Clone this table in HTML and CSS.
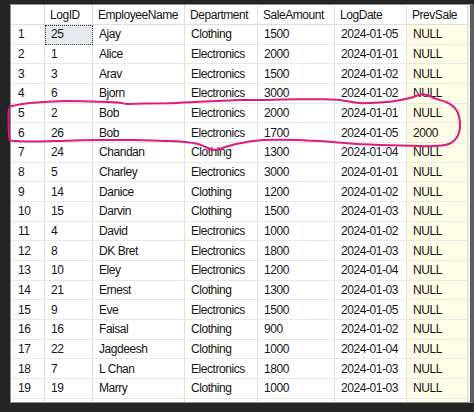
FILE: index.html
```html
<!DOCTYPE html>
<html>
<head>
<meta charset="utf-8">
<link rel="stylesheet" href="styles.css">
</head>
<body>
<div class="frame">
  <div class="box">
    <div class="grid">
      <div class="row head">
        <div class="c num"></div><div class="c">LogID</div><div class="c">EmployeeName</div><div class="c">Department</div><div class="c">SaleAmount</div><div class="c">LogDate</div><div class="c">PrevSale</div>
      </div>
      <div class="row"><div class="c num">1</div><div class="c focus">25</div><div class="c">Ajay</div><div class="c">Clothing</div><div class="c">1500</div><div class="c">2024-01-05</div><div class="c prev">NULL</div></div>
      <div class="row"><div class="c num">2</div><div class="c">1</div><div class="c">Alice</div><div class="c">Electronics</div><div class="c">2000</div><div class="c">2024-01-01</div><div class="c prev">NULL</div></div>
      <div class="row"><div class="c num">3</div><div class="c">3</div><div class="c">Arav</div><div class="c">Electronics</div><div class="c">1500</div><div class="c">2024-01-02</div><div class="c prev">NULL</div></div>
      <div class="row"><div class="c num">4</div><div class="c">6</div><div class="c">Bjorn</div><div class="c">Electronics</div><div class="c">3000</div><div class="c">2024-01-02</div><div class="c prev">NULL</div></div>
      <div class="row"><div class="c num">5</div><div class="c">2</div><div class="c">Bob</div><div class="c">Electronics</div><div class="c">2000</div><div class="c">2024-01-01</div><div class="c prev">NULL</div></div>
      <div class="row"><div class="c num">6</div><div class="c">26</div><div class="c">Bob</div><div class="c">Electronics</div><div class="c">1700</div><div class="c">2024-01-05</div><div class="c prev">2000</div></div>
      <div class="row"><div class="c num">7</div><div class="c">24</div><div class="c">Chandan</div><div class="c">Clothing</div><div class="c">1300</div><div class="c">2024-01-04</div><div class="c prev">NULL</div></div>
      <div class="row"><div class="c num">8</div><div class="c">5</div><div class="c">Charley</div><div class="c">Electronics</div><div class="c">3000</div><div class="c">2024-01-01</div><div class="c prev">NULL</div></div>
      <div class="row"><div class="c num">9</div><div class="c">14</div><div class="c">Danice</div><div class="c">Clothing</div><div class="c">1200</div><div class="c">2024-01-02</div><div class="c prev">NULL</div></div>
      <div class="row"><div class="c num">10</div><div class="c">15</div><div class="c">Darvin</div><div class="c">Clothing</div><div class="c">1500</div><div class="c">2024-01-03</div><div class="c prev">NULL</div></div>
      <div class="row"><div class="c num">11</div><div class="c">4</div><div class="c">David</div><div class="c">Electronics</div><div class="c">1000</div><div class="c">2024-01-02</div><div class="c prev">NULL</div></div>
      <div class="row"><div class="c num">12</div><div class="c">8</div><div class="c">DK Bret</div><div class="c">Electronics</div><div class="c">1800</div><div class="c">2024-01-03</div><div class="c prev">NULL</div></div>
      <div class="row"><div class="c num">13</div><div class="c">10</div><div class="c">Eley</div><div class="c">Electronics</div><div class="c">1200</div><div class="c">2024-01-04</div><div class="c prev">NULL</div></div>
      <div class="row"><div class="c num">14</div><div class="c">21</div><div class="c">Ernest</div><div class="c">Clothing</div><div class="c">1300</div><div class="c">2024-01-03</div><div class="c prev">NULL</div></div>
      <div class="row"><div class="c num">15</div><div class="c">9</div><div class="c">Eve</div><div class="c">Electronics</div><div class="c">1500</div><div class="c">2024-01-05</div><div class="c prev">NULL</div></div>
      <div class="row"><div class="c num">16</div><div class="c">16</div><div class="c">Faisal</div><div class="c">Clothing</div><div class="c">900</div><div class="c">2024-01-02</div><div class="c prev">NULL</div></div>
      <div class="row"><div class="c num">17</div><div class="c">22</div><div class="c">Jagdeesh</div><div class="c">Clothing</div><div class="c">1000</div><div class="c">2024-01-04</div><div class="c prev">NULL</div></div>
      <div class="row"><div class="c num">18</div><div class="c">7</div><div class="c">L Chan</div><div class="c">Electronics</div><div class="c">1800</div><div class="c">2024-01-03</div><div class="c prev">NULL</div></div>
      <div class="row"><div class="c num">19</div><div class="c">19</div><div class="c">Marry</div><div class="c">Clothing</div><div class="c">1000</div><div class="c">2024-01-03</div><div class="c prev">NULL</div></div>
      <div class="row"><div class="c num"></div><div class="c"></div><div class="c"></div><div class="c"></div><div class="c"></div><div class="c"></div><div class="c prev"></div></div>
    </div>
  </div>
  <svg class="ink" width="474" height="412" viewBox="0 0 474 412">
    <path d="M 10,106.5 C 20,104 28,103 33,102.7 C 50,101.5 60,101 67,101 C 85,101 95,101.5 100,101.7 C 110,102 117,102.3 120,102.7 C 124,103.5 126,104.3 128,104 C 140,103.6 155,103.4 167,103.3 C 185,102.6 205,101.3 240,100 C 250,99.8 256,100 263,100 C 280,99.6 290,99.3 297,99.3 C 310,99.3 318,99.3 323,99.3 C 332,99.5 336,99.8 340,100 C 350,101.5 356,103.3 363,103.3 C 375,103 383,102.3 390,101.7 C 398,100.8 404,99.5 410,98 C 415,96.5 419,94.5 423,94.3 C 427,94.3 430,96.5 434,98.3 C 439,100 442,100.5 446,102 C 451,104 455,107 457.5,112 C 460,118 460.5,125 459.5,131 C 458,137 455,141 450,143.5 C 443,146.5 432,146.5 420,146 C 405,145.5 392,145.2 380,145 C 365,144.5 353,143.8 347,143.3 C 340,142.6 335,142 330,141.7 C 318,141 305,140.3 297,140 C 285,139.8 272,139.8 263,140 C 254,140.5 246,141.8 240,143.3 C 232,145 226,146.5 221,148.5 C 217,150 214,150.5 211,149.5 C 207,148 204,145.5 198,144 C 190,142 180,141.3 167,141 C 155,140.6 145,140.2 133,140 C 120,140 110,140 100,140 C 88,140 78,140.4 67,140.7 C 55,141 45,141.5 33,141.6 C 22,141.6 14,141 10,140.5 C 9,138 8.7,130 8.6,122 C 8.5,116 8.6,112 9,109"/>
  </svg>
</div>
</body>
</html>
```

FILE: styles.css
```css
html, body {
  margin: 0;
  padding: 0;
  background: #252526;
}

.frame {
  position: relative;
  width: 474px;
  height: 412px;
  box-sizing: border-box;
  padding: 4px 0 9px 10px;
  background: #252526;
}

.box {
  height: 399px;
  box-sizing: border-box;
  border: 1px solid #8e8e8e;
  border-right: 4px solid #5d5d5d;
  background: #f0f0f0;
  overflow: hidden;
}

.grid {
  width: 457px;
  background: #ffffff;
}

.row {
  display: grid;
  grid-template-columns: 34px 48px 92px 73px 77px 72px 61px;
  height: 19.68px;
}

.row.head {
  height: 20px;
}

.c {
  box-sizing: border-box;
  display: flex;
  align-items: center;
  padding-left: 6px;
  border-right: 1px solid #e0e0e0;
  border-bottom: 1px solid #e8e8e8;
  font-family: "Liberation Sans", Arial, sans-serif;
  font-size: 12px;
  letter-spacing: -0.45px;
  color: #141414;
  white-space: nowrap;
  overflow: hidden;
}

.head .c {
  padding-left: 5px;
  border-bottom-color: #dedede;
}

.c.num {
  padding-left: 7px;
}

.c.prev {
  background: #fffce6;
}

.c.focus {
  background: #e6e9f0;
  outline: 1px dotted #3a3a3a;
  outline-offset: -1px;
}

.ink {
  position: absolute;
  left: 0;
  top: 0;
  pointer-events: none;
}

.ink path {
  fill: none;
  stroke: #e2197d;
  stroke-width: 2;
  stroke-linecap: round;
  stroke-linejoin: round;
}
```
